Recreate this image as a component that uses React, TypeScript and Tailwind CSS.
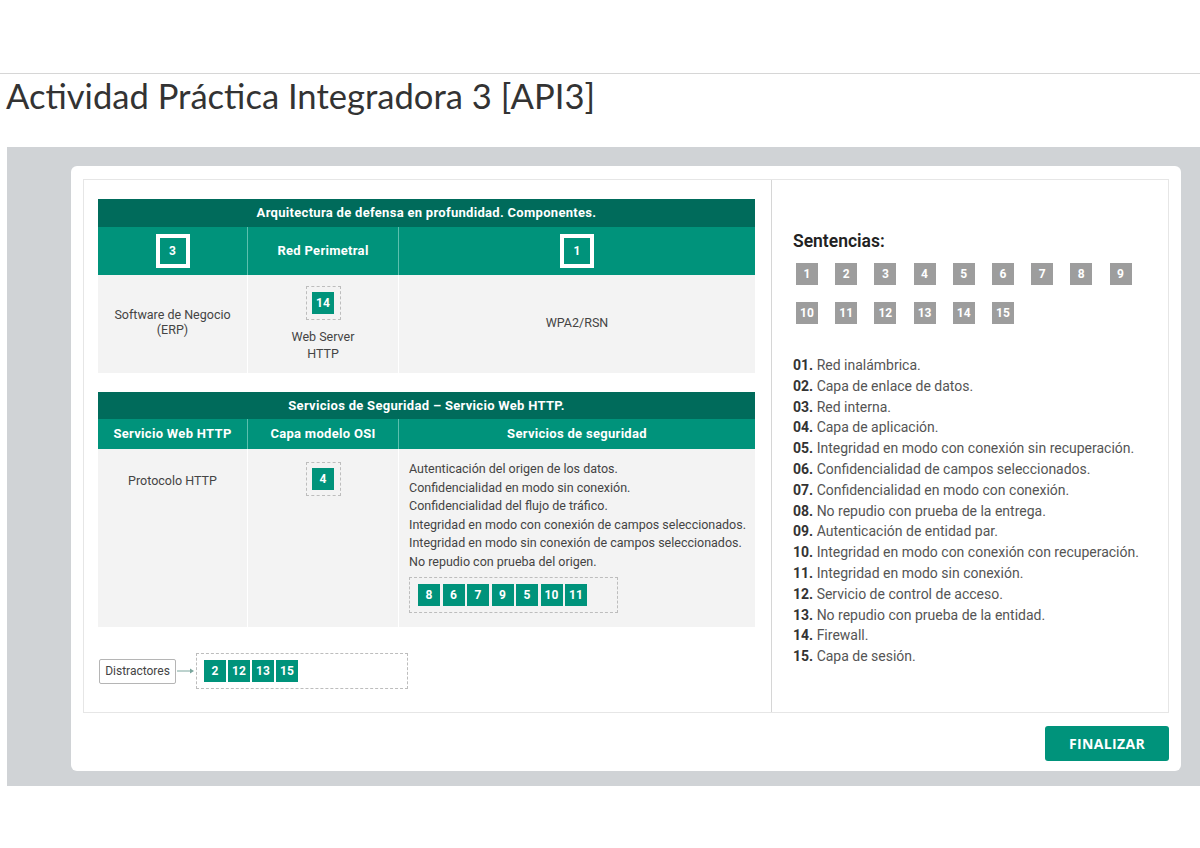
import React from 'react'

const SENTENCES = [
  'Red inalámbrica.',
  'Capa de enlace de datos.',
  'Red interna.',
  'Capa de aplicación.',
  'Integridad en modo con conexión sin recuperación.',
  'Confidencialidad de campos seleccionados.',
  'Confidencialidad en modo con conexión.',
  'No repudio con prueba de la entrega.',
  'Autenticación de entidad par.',
  'Integridad en modo con conexión con recuperación.',
  'Integridad en modo sin conexión.',
  'Servicio de control de acceso.',
  'No repudio con prueba de la entidad.',
  'Firewall.',
  'Capa de sesión.',
]

const SERVICES = [
  'Autenticación del origen de los datos.',
  'Confidencialidad en modo sin conexión.',
  'Confidencialidad del flujo de tráfico.',
  'Integridad en modo con conexión de campos seleccionados.',
  'Integridad en modo sin conexión de campos seleccionados.',
  'No repudio con prueba del origen.',
]

// Teal draggable tile
function Tile({ n }: { n: number }) {
  return (
    <div className="w-[22px] h-[22px] bg-[#00937b] text-white text-[12px] font-bold flex items-center justify-center">
      {n}
    </div>
  )
}

// Dashed drop zone around a single tile
function DropZone({ n }: { n: number }) {
  return (
    <div className="w-[35px] h-[34px] border border-dashed border-[#bdbdbd] flex items-center justify-center">
      <Tile n={n} />
    </div>
  )
}

// White framed drop zone used inside the teal header row
function HeaderDrop({ n }: { n: number }) {
  return (
    <div className="w-[34px] h-[34px] border-[4px] border-white flex items-center justify-center">
      <div className="w-[22px] h-[22px] bg-[#00937b] text-white text-[12px] font-bold flex items-center justify-center">
        {n}
      </div>
    </div>
  )
}

function GrayTile({ n }: { n: number }) {
  return (
    <div className="w-[22px] h-[22px] bg-[#9d9d9d] text-white text-[12px] font-bold flex items-center justify-center">
      {n}
    </div>
  )
}

export default function App() {
  return (
    <div className="w-[1200px] h-[848px] bg-white overflow-hidden" style={{ fontFamily: 'Roboto, "Noto Sans", sans-serif' }}>
      <div className="h-[74px] border-b border-[#d6d6d6]" />
      <h1
        className="pl-[6px] h-[73px] text-[34.6px] leading-[44px] text-[#333]"
        style={{ fontFamily: 'Lato, "Open Sans", sans-serif' }}
      >
        Actividad Práctica Integradora 3 [API3]
      </h1>

      {/* Gray stage */}
      <div className="ml-[7px] bg-[#d0d3d6] pt-[19px] pb-[15px] pl-[64px] pr-[19px]">
        <div className="bg-white rounded-[6px] pt-[13px] px-[12px] pb-[10px]">
          <div className="flex h-[534px] border border-[#e6e6e6]">
            {/* Left: tables */}
            <div className="w-[688px] border-r border-[#d6d6d6] pt-[19px] pl-[14px] pr-[16px]">
              {/* Table 1 */}
              <div className="w-[657px] text-[12.5px]">
                <div className="h-[28px] bg-[#006b5b] text-white text-[13px] tracking-[0.3px] font-bold flex items-center justify-center">
                  Arquitectura de defensa en profundidad. Componentes.
                </div>
                <div className="flex h-[48px] bg-[#00937b] text-white text-[13px] tracking-[0.3px] font-bold">
                  <div className="w-[150px] flex items-center justify-center border-r border-[#5cbfae]">
                    <HeaderDrop n={3} />
                  </div>
                  <div className="w-[151px] flex items-center justify-center border-r border-[#5cbfae]">
                    Red Perimetral
                  </div>
                  <div className="flex-1 flex items-center justify-center">
                    <HeaderDrop n={1} />
                  </div>
                </div>
                <div className="flex h-[98px] bg-[#f3f3f3] text-[#444]">
                  <div className="w-[150px] flex items-center justify-center text-center leading-[15px] border-r border-white pb-[4px]">
                    Software de Negocio
                    <br />
                    (ERP)
                  </div>
                  <div className="w-[151px] flex flex-col items-center pt-[11px] border-r border-white">
                    <DropZone n={14} />
                    <div className="mt-[8px] leading-[17px] text-center">
                      Web Server
                      <br />
                      HTTP
                    </div>
                  </div>
                  <div className="flex-1 flex items-center justify-center pb-[2px]">WPA2/RSN</div>
                </div>
              </div>

              {/* Table 2 */}
              <div className="w-[657px] text-[12.5px] mt-[19px]">
                <div className="h-[27px] bg-[#006b5b] text-white text-[13px] tracking-[0.3px] font-bold flex items-center justify-center">
                  Servicios de Seguridad – Servicio Web HTTP.
                </div>
                <div className="flex h-[30px] bg-[#00937b] text-white text-[13px] tracking-[0.3px] font-bold">
                  <div className="w-[150px] flex items-center justify-center border-r border-[#5cbfae]">
                    Servicio Web HTTP
                  </div>
                  <div className="w-[151px] flex items-center justify-center border-r border-[#5cbfae]">
                    Capa modelo OSI
                  </div>
                  <div className="flex-1 flex items-center justify-center">Servicios de seguridad</div>
                </div>
                <div className="flex h-[178px] bg-[#f3f3f3] text-[#444]">
                  <div className="w-[150px] flex justify-center pt-[23px] border-r border-white">Protocolo HTTP</div>
                  <div className="w-[151px] flex justify-center pt-[13px] border-r border-white">
                    <DropZone n={4} />
                  </div>
                  <div className="flex-1 pl-[10px] pt-[11px]">
                    {SERVICES.map((s) => (
                      <div key={s} className="leading-[18.6px]">
                        {s}
                      </div>
                    ))}
                    <div className="mt-[5px] w-[209px] h-[36px] border border-dashed border-[#bdbdbd] flex items-center pl-[8px] gap-[2.5px]">
                      {[8, 6, 7, 9, 5, 10, 11].map((n) => (
                        <Tile key={n} n={n} />
                      ))}
                    </div>
                  </div>
                </div>
              </div>

              {/* Distractores */}
              <div className="flex items-center mt-[26px]">
                <div className="ml-[1px] h-[25px] w-[77px] border border-[#b5b5b5] rounded-[2px] text-[12px] text-[#444] flex items-center justify-center">
                  Distractores
                </div>
                <svg width="20" height="8" viewBox="0 0 20 8" className="mx-[0px]">
                  <line x1="1" y1="4" x2="15" y2="4" stroke="#7aa69d" strokeWidth="1" />
                  <path d="M14 1.5 L18 4 L14 6.5 Z" fill="#7aa69d" />
                </svg>
                <div className="w-[212px] h-[36px] border border-dashed border-[#bdbdbd] flex items-center pl-[7px] gap-[2px]">
                  {[2, 12, 13, 15].map((n) => (
                    <Tile key={n} n={n} />
                  ))}
                </div>
              </div>
            </div>

            {/* Right: sentences */}
            <div className="flex-1 pl-[21px] pt-[49px]">
              <div className="text-[17.5px] font-semibold text-[#222] leading-[24px]">Sentencias:</div>
              <div className="grid grid-cols-[repeat(9,39.2px)] gap-y-[17px] mt-[10px] pl-[3px]">
                {Array.from({ length: 15 }, (_, i) => (
                  <GrayTile key={i} n={i + 1} />
                ))}
              </div>
              <div className="mt-[31px] text-[14px] text-[#555]">
                {SENTENCES.map((s, i) => (
                  <div key={s} className="leading-[20.8px]">
                    <span className="font-bold text-[#333]">{String(i + 1).padStart(2, '0')}.</span> {s}
                  </div>
                ))}
              </div>
            </div>
          </div>

          <div className="flex justify-end mt-[13px] pr-[0px]">
            <button
              className="w-[124px] h-[35px] rounded-[3px] bg-[#00937b] text-white text-[14px] font-bold tracking-wide"
              style={{ fontFamily: '"Open Sans", sans-serif' }}
            >
              FINALIZAR
            </button>
          </div>
        </div>
      </div>
    </div>
  )
}
